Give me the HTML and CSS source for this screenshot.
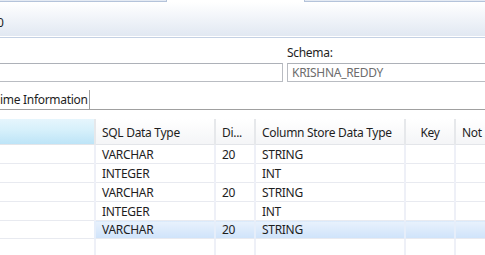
FILE: index.html
```html
<!DOCTYPE html>
<html lang="en">
<head>
  <meta charset="UTF-8">
  <title>Table Definition</title>
  <link rel="stylesheet" href="styles.css">
</head>
<body>
<!-- Linguette dei documenti aperti -->
<div class="doc-tabs">
  <div class="doc-tab"></div>
  <div class="doc-tab active"></div>
  <div class="doc-tab rest"></div>
</div>

<div class="toolbar">
  <span class="toolbar-title">0</span>
</div>

<!-- Nome tabella e schema -->
<div class="form">
  <div class="field field-name">
    <label class="field-label">&nbsp;</label>
    <div class="input"></div>
  </div>
  <div class="field field-schema">
    <label class="field-label">Schema:</label>
    <div class="input readonly">KRISHNA_REDDY</div>
  </div>
</div>

<div class="subtabs">
  <div class="subtab">ime Information</div>
</div>

<!-- Griglia delle colonne -->
<table class="grid">
  <colgroup>
    <col class="c-name">
    <col class="c-sql">
    <col class="c-dim">
    <col class="c-store">
    <col class="c-key">
    <col class="c-not">
  </colgroup>
  <thead>
    <tr>
      <th class="sorted"></th>
      <th>SQL Data Type</th>
      <th>Di...</th>
      <th>Column Store Data Type</th>
      <th class="center">Key</th>
      <th>Not <span class="mark"></span></th>
    </tr>
  </thead>
  <tbody>
    <tr><td></td><td>VARCHAR</td><td>20</td><td>STRING</td><td></td><td></td></tr>
    <tr><td></td><td>INTEGER</td><td></td><td>INT</td><td></td><td></td></tr>
    <tr><td></td><td>VARCHAR</td><td>20</td><td>STRING</td><td></td><td></td></tr>
    <tr><td></td><td>INTEGER</td><td></td><td>INT</td><td></td><td></td></tr>
    <tr class="selected"><td></td><td>VARCHAR</td><td>20</td><td>STRING</td><td></td><td></td></tr>
    <tr class="filler"><td></td><td></td><td></td><td></td><td></td><td></td></tr>
  </tbody>
</table>
</body>
</html>
```

FILE: styles.css
```css
body {
  margin: 0;
  width: 485px;
  height: 255px;
  overflow: hidden;
  background: #fff;
  font-family: "Noto Sans", "Open Sans", sans-serif;
  font-size: 12px;
  letter-spacing: -0.3px;
  color: #1e1e1e;
}
/* Linguette in alto */
.doc-tabs {
  display: flex;
  height: 2px;
}
.doc-tab {
  width: 166px;
  border-right: 1px solid #b4c3da;
  border-bottom: 1px solid #b4c3da;
  background: #e4eaf3;
}
.doc-tab.active {
  width: 137px;
  background: #fff;
  border: none;
}
.doc-tab.rest {
  flex: 1;
  border-right: none;
  border-left: 1px solid #b4c3da;
}
/* Barra con sfumatura */
.toolbar {
  height: 34px;
  background: linear-gradient(#ffffff, #e1e8f2);
  border-bottom: 1px solid #fff;
  box-shadow: 0 1px 0 #c4d1e4;
  display: flex;
  align-items: center;
}
.toolbar-title {
  margin-left: -3px;
  padding-top: 6px;
}
/* Campi */
.form {
  display: flex;
  gap: 4px;
  padding-top: 8px;
}
.field {
  display: flex;
  flex-direction: column;
  flex-shrink: 0;
  gap: 3px;
}
.field-label {
  height: 15px;
  line-height: 15px;
}
.field-name {
  width: 288px;
  margin-left: -5px;
}
.field-schema {
  width: 220px;
}
.input {
  height: 17px;
  line-height: 17px;
  border: 1px solid #b9bcc2;
  border-top-color: #adb1b8;
  padding-left: 4px;
}
.input.readonly {
  color: #6d6d6d;
}
/* Linguette secondarie */
.subtabs {
  display: flex;
  margin-top: 8px;
  border-bottom: 1px solid #a0a0a0;
}
.subtab {
  height: 19px;
  line-height: 20px;
  width: 89px;
  border-right: 1px solid #a0a0a0;
}
/* Griglia */
.grid {
  margin-top: 9px;
  table-layout: fixed;
  width: 535px;
  border-collapse: collapse;
}
.c-name { width: 95px; }
.c-sql { width: 120px; }
.c-dim { width: 40px; }
.c-store { width: 150px; }
.c-key { width: 50px; }
.c-not { width: 80px; }
.grid th {
  height: 24px;
  padding: 1px 0 0 6px;
  text-align: left;
  font-weight: normal;
  background: linear-gradient(#ffffff, #f4f5f7);
  border-left: 2px solid #e6e8eb;
  border-bottom: 1px solid #e3e5e9;
  white-space: nowrap;
  overflow: hidden;
}
.grid th.sorted {
  border-left: none;
  background: linear-gradient(#e6f6fd, #d6f0fb 45%, #bde4f7);
  border-right: 1px solid #a9d8f0;
}
.grid th.center {
  text-align: center;
  padding: 1px 0 0;
}
.mark {
  display: inline-block;
  width: 3px;
  height: 10px;
  background: #f7ea9a;
  vertical-align: middle;
}
.grid td {
  height: 18px;
  padding: 0 0 0 6px;
  border-left: 2px solid #eef0f7;
  border-bottom: 1px solid #e8eaf0;
  white-space: nowrap;
  overflow: hidden;
}
.grid td:first-child {
  border-left: none;
}
.grid tr.selected td {
  background: linear-gradient(#e8f1fc, #cfe3fa);
  border-top: 1px solid #86acdd;
  border-left-color: #e6eefa;
  height: 17px;
}
.grid tr.selected td:first-child {
  background: #fff;
  border-top: none;
}
.grid tr.filler td {
  height: 17px;
  border-bottom: none;
}
```
